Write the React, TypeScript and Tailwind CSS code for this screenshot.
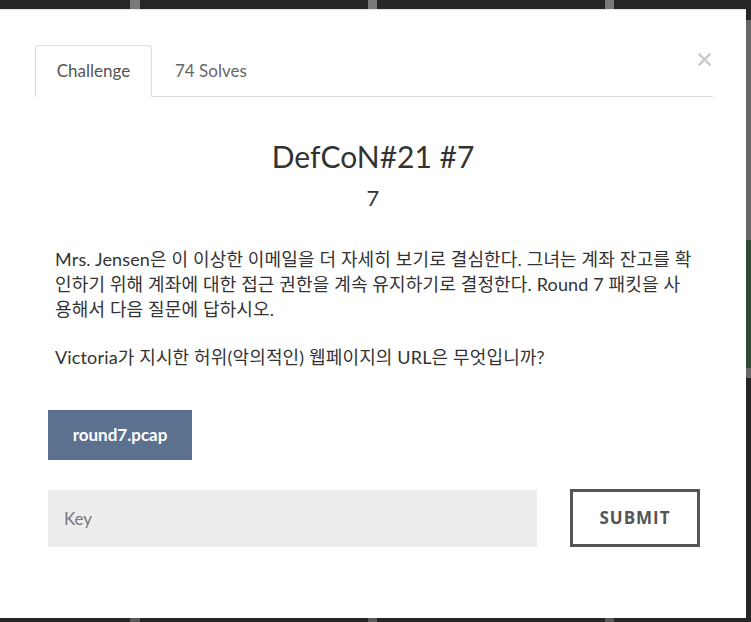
import React from "react";

const lato = { fontFamily: "Lato, 'Noto Sans CJK KR', sans-serif" };

function Strip({ h, tone }: { h: string; tone: string }) {
  return (
    <div className={`flex gap-[228px] pl-[130px] ${h}`}>
      <div className={`w-[10px] h-full ${tone}`} />
      <div className={`w-[9px] h-full ${tone}`} />
      <div className={`w-[9px] h-full ${tone}`} />
    </div>
  );
}

function Modal() {
  return (
    <div className="w-[746px] h-full bg-white border-t border-[#e5e5e5] text-[#333] flex flex-col">
      <div className="ml-[35px] mr-[33px] mt-[35px] flex border-b border-[#ddd]">
        <div className="w-[117px] h-[52px] -mb-px flex items-center justify-center border border-[#ddd] border-b-white rounded-t-[4px] bg-white text-[17px] text-[#555]">
          Challenge
        </div>
        <div className="h-[51px] ml-[2px] px-[21px] flex items-center text-[17px] text-[#666]">
          74 Solves
        </div>
        <button className="ml-auto mr-[2px] mt-[8px] self-start w-[13px] h-[13px]" aria-label="close">
          <svg viewBox="0 0 13 13" className="w-[13px] h-[13px]">
            <path d="M1.5 1.5L11.5 11.5M11.5 1.5L1.5 11.5" stroke="#c9c9c9" strokeWidth="2.4" strokeLinecap="square" />
          </svg>
        </button>
      </div>

      <h2 className="mt-[41px] text-center text-[30px] leading-[36px] text-[#333]">DefCoN#21 #7</h2>
      <div className="mt-[11px] text-center text-[22px] leading-[26px] text-[#333]">7</div>

      <div className="mt-[36px] px-[55px] text-[18px] leading-[25px] tracking-[0.15px] text-[#333] whitespace-nowrap">
        <p>
          Mrs. Jensen은 이 이상한 이메일을 더 자세히 보기로 결심한다. 그녀는 계좌 잔고를 확
          <br />
          인하기 위해 계좌에 대한 접근 권한을 계속 유지하기로 결정한다. Round 7 패킷을 사
          <br />
          용해서 다음 질문에 답하시오.
        </p>
        <p className="mt-[23px]">Victoria가 지시한 허위(악의적인) 웹페이지의 URL은 무엇입니까?</p>
      </div>

      <div className="px-[48px] mt-[40px]">
        <button className="w-[144px] h-[50px] bg-[#5c7190] text-white font-bold text-[17px]">
          round7.pcap
        </button>
      </div>

      <div className="pl-[48px] pr-[46px] mt-[29px] flex items-center justify-between">
        <input
          placeholder="Key"
          className="w-[489px] h-[57px] bg-[#ededed] px-[16px] text-[17px] text-[#333] placeholder:text-[#777] outline-none"
        />
        <button
          className="w-[130px] h-[58px] border-[3px] border-[#555] bg-white text-[#555] font-bold text-[17px] tracking-[1px]"
          style={{ fontFamily: "'Open Sans', sans-serif" }}
        >
          SUBMIT
        </button>
      </div>
    </div>
  );
}

export default function App() {
  return (
    <div className="w-[751px] h-[622px] overflow-hidden bg-[#262626] flex flex-col" style={lato}>
      <Strip h="h-[9px]" tone="bg-[#7a7a7a]" />
      <div className="flex-1 flex min-h-0">
        <Modal />
        <div className="w-[5px] flex flex-col">
          <div className="h-[11px]" />
          <div className="h-[220px] bg-[#666]" />
          <div className="h-[128px] bg-[#2f4a35]" />
          <div className="h-[10px] bg-[#666]" />
        </div>
      </div>
      <Strip h="h-[4px]" tone="bg-[#5a5a5a]" />
    </div>
  );
}
